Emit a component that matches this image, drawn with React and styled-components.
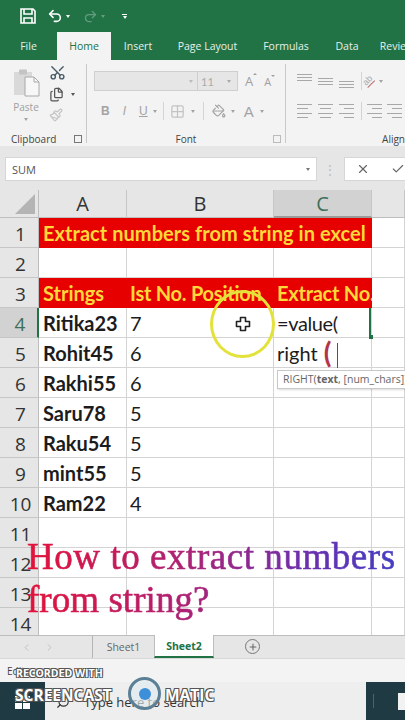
import React from "react";
import styled, { createGlobalStyle } from "styled-components";
import {
  Undo2,
  Redo2,
  Scissors,
  Files,
  Paintbrush,
  PaintBucket,
  Grid2x2,
  X,
  Check,
  Plus,
  ChevronLeft,
  ChevronRight,
  Search,
} from "lucide-react";

const GlobalStyle = createGlobalStyle`
  html, body {
    margin: 0;
    padding: 0;
    width: 405px;
    height: 720px;
    overflow: hidden;
    background: #fff;
    font-family: "Lato", "Liberation Sans", sans-serif;
  }
`;

const Screen = styled.div`
  position: relative;
  width: 405px;
  height: 720px;
  display: flex;
  flex-direction: column;
  overflow: hidden;
`;

const TitleBar = styled.div`
  height: 60px;
  flex: none;
  background: #217346;
  display: flex;
  flex-direction: column;
`;

const QuickAccess = styled.div`
  height: 32px;
  display: flex;
  align-items: center;
  padding-left: 20px;
  color: #fff;
`;

const QuickGap = styled.span`
  display: inline-flex;
  align-items: center;
  margin-left: ${(p) => p.$left || 0}px;
  opacity: ${(p) => (p.$dim ? 0.3 : 1)};
`;

const CustomizeMark = styled.span`
  display: inline-flex;
  flex-direction: column;
  align-items: center;
  gap: 1px;
  margin-left: ${(p) => p.$left}px;
  &::before {
    content: "";
    width: 5px;
    height: 1px;
    background: #fff;
  }
`;

const Caret = styled.span`
  display: inline-block;
  width: 0;
  height: 0;
  margin-left: ${(p) => p.$left ?? 3}px;
  border-left: 2.5px solid transparent;
  border-right: 2.5px solid transparent;
  border-top: 3px solid ${(p) => p.$color || "currentColor"};
`;

const Tabs = styled.div`
  height: 28px;
  display: flex;
  align-items: stretch;
  white-space: nowrap;
  overflow: hidden;
`;

const Tab = styled.div`
  flex: none;
  width: ${(p) => p.$w}px;
  text-align: center;
  line-height: 28px;
  font-family: "Open Sans", sans-serif;
  font-size: 10.5px;
  color: ${(p) => (p.$active ? "#217346" : "#e6f0ea")};
  background: ${(p) => (p.$active ? "#f3f3f3" : "transparent")};
`;

const Ribbon = styled.div`
  height: 86px;
  flex: none;
  background: #f3f3f3;
  display: flex;
  padding-top: 4px;
  box-sizing: border-box;
  overflow: hidden;
  color: #a3a3a3;
`;

const Group = styled.div`
  flex: none;
  width: ${(p) => p.$w}px;
  box-sizing: border-box;
  height: 79px;
  border-right: ${(p) => (p.$last ? "none" : "1px solid #c9c9c9")};
`;

const GroupBody = styled.div`
  height: 68px;
  display: flex;
`;

const GroupLabel = styled.div`
  position: relative;
  height: 14px;
  line-height: 14px;
  text-align: ${(p) => p.$align || "center"};
  padding-left: ${(p) => p.$pad || 0}px;
  font-family: "Open Sans", sans-serif;
  font-size: 10px;
  color: #444;
  white-space: nowrap;
`;

const Launcher = styled.span`
  position: absolute;
  right: 4px;
  top: 3px;
  width: 6px;
  height: 6px;
  border: 1px solid ${(p) => (p.$dim ? "#bbb" : "#777")};
`;

const PasteColumn = styled.div`
  width: 46px;
  display: flex;
  flex-direction: column;
  align-items: center;
  padding: 4px 0 0 6px;
  box-sizing: border-box;
`;

const PasteLabel = styled.div`
  font-family: "Open Sans", sans-serif;
  font-size: 10px;
  line-height: 14px;
  margin: 3px 0 4px;
  color: #a0a0a0;
`;

const ClipColumn = styled.div`
  display: flex;
  flex-direction: column;
  gap: 6px;
  padding-left: 3px;
`;

const ClipRow = styled.div`
  display: flex;
  align-items: center;
  color: ${(p) => p.$color || "#555"};
`;

const FontColumn = styled.div`
  display: flex;
  flex-direction: column;
  padding: 7px 0 0 ${(p) => p.$pad ?? 7}px;
  gap: 10px;
`;

const FontRow = styled.div`
  display: flex;
  align-items: center;
  height: 20px;
`;

const FontNameBox = styled.div`
  width: 104px;
  height: 20px;
  background: #e6e6e6;
  border: 1px solid #cfcfcf;
  box-sizing: border-box;
  display: flex;
  align-items: center;
  justify-content: flex-end;
  padding-right: 4px;
  color: #bbb;
`;

const FontSizeBox = styled.div`
  width: 40px;
  height: 20px;
  background: #e6e6e6;
  border: 1px solid #cfcfcf;
  border-left: none;
  box-sizing: border-box;
  display: flex;
  align-items: center;
  justify-content: space-between;
  padding: 0 6px 0 3px;
  font-size: 11px;
  color: #aaa;
`;

const GrowLetter = styled.span`
  position: relative;
  font-family: "Open Sans", sans-serif;
  font-size: ${(p) => p.$size}px;
  color: #a0a0a0;
  margin-left: ${(p) => p.$left}px;
`;

const GrowMark = styled.span`
  position: absolute;
  right: -4px;
  top: 1px;
  width: 0;
  height: 0;
  border-left: 2px solid transparent;
  border-right: 2px solid transparent;
  border-bottom: ${(p) => (p.$down ? "none" : "2px solid #a0a0a0")};
  border-top: ${(p) => (p.$down ? "2px solid #a0a0a0" : "none")};
`;

const StyleLetter = styled.span`
  font-family: "Liberation Sans", sans-serif;
  font-size: ${(p) => p.$size || 12}px;
  font-weight: ${(p) => (p.$bold ? 700 : 400)};
  font-style: ${(p) => (p.$italic ? "italic" : "normal")};
  text-decoration: ${(p) => (p.$under ? "underline" : "none")};
  color: #a3a3a3;
  margin-left: ${(p) => p.$left || 0}px;
`;

const Divider = styled.span`
  width: 1px;
  height: 18px;
  background: #d4d4d4;
  margin: 0 ${(p) => p.$gap || 6}px;
`;

const LinesIcon = styled.span`
  display: flex;
  flex-direction: column;
  width: 15px;
  height: 14px;
  margin-right: ${(p) => p.$right ?? 6}px;
  align-items: ${(p) => p.$align || "stretch"};
  justify-content: ${(p) => p.$v || "space-between"};
  gap: ${(p) => (p.$v ? "2px" : 0)};
  color: #b0b0b0;
`;

const Line = styled.i`
  display: block;
  height: 1px;
  width: ${(p) => p.$w || 100}%;
  background: #a8a8a8;
`;

const Orientation = styled.span`
  display: inline-block;
  font-family: "Liberation Sans", sans-serif;
  font-size: 9px;
  color: #aaa;
  transform: rotate(-45deg);
  border-bottom: 1px solid #c26a6a;
  line-height: 9px;
`;

const FormulaBar = styled.div`
  height: 44px;
  flex: none;
  box-sizing: border-box;
  background: #e6e6e6;
  display: flex;
  padding: 11px 0 9px 5px;
`;

const NameBox = styled.div`
  width: 320px;
  background: #fff;
  border: 1px solid #d6d6d6;
  box-sizing: border-box;
  display: flex;
  align-items: center;
  justify-content: space-between;
  padding: 0 6px;
  font-family: "Open Sans", sans-serif;
  font-size: 11px;
  color: #555;
`;

const Dots = styled.div`
  width: 28px;
  display: flex;
  align-items: center;
  justify-content: center;
  color: #bbb;
  font-size: 12px;
`;

const FormulaButtons = styled.div`
  flex: 1;
  background: #fff;
  border: 1px solid #d6d6d6;
  border-right: none;
  display: flex;
  align-items: center;
  padding-left: 11px;
  gap: 21px;
  color: #666;
`;

const Sheet = styled.div`
  height: 445px;
  flex: none;
  display: grid;
  grid-template-columns: 39px 88px 147px 98px 33px;
  grid-template-rows: 28px repeat(14, 30px);
  background: #fff;
  overflow: hidden;
`;

const Corner = styled.div`
  background: #e6e6e6;
  border-right: 1px solid #bdbdbd;
  border-bottom: 1px solid #bdbdbd;
  position: relative;
  &::after {
    content: "";
    position: absolute;
    right: 3px;
    bottom: 3px;
    border-style: solid;
    border-width: 0 0 20px 20px;
    border-color: transparent transparent #b4b4b4 transparent;
  }
`;

const ColHead = styled.div`
  background: ${(p) => (p.$active ? "#d2d2d2" : "#e6e6e6")};
  border-right: 1px solid #c6c6c6;
  border-bottom: ${(p) => (p.$active ? "2px solid #9a9a9a" : "1px solid #bdbdbd")};
  box-sizing: border-box;
  display: flex;
  align-items: center;
  justify-content: center;
  font-size: 20px;
  color: ${(p) => (p.$active ? "#3f6f58" : "#333")};
  font-family: "Open Sans", sans-serif;
`;

const RowHead = styled.div`
  background: ${(p) => (p.$active ? "#d2d2d2" : "#e6e6e6")};
  border-right: ${(p) => (p.$active ? "2px solid #217346" : "1px solid #bdbdbd")};
  border-bottom: 1px solid #c6c6c6;
  box-sizing: border-box;
  display: flex;
  align-items: center;
  justify-content: center;
  padding: 2px 0 0 3px;
  font-family: "Open Sans", sans-serif;
  font-size: 19px;
  color: ${(p) => (p.$active ? "#3f6f58" : "#333")};
`;

const Cell = styled.div`
  box-sizing: border-box;
  border-right: 1px solid ${(p) => (p.$red ? "#e60000" : "#d4d4d4")};
  border-bottom: 1px solid ${(p) => (p.$red ? "#e60000" : "#d4d4d4")};
  background: ${(p) => (p.$red ? "#e60000" : "#fff")};
  color: ${(p) => (p.$red ? "#ffd83a" : "#1c1c1c")};
  font-family: "Lato", "Liberation Sans", sans-serif;
  font-size: 20px;
  font-weight: ${(p) => (p.$bold || p.$red ? 700 : 400)};
  line-height: 31px;
  padding-left: ${(p) => p.$pad ?? 4}px;
  letter-spacing: ${(p) => p.$track || 0}px;
  white-space: nowrap;
  grid-column: ${(p) => p.$span || "auto"};
  overflow: visible;
`;

const SelectedCell = styled(Cell)`
  position: relative;
  box-shadow: inset -2px 0 0 #217346;
  letter-spacing: -0.4px;
  &::after {
    content: "";
    position: absolute;
    right: -2px;
    bottom: -2px;
    width: 4px;
    height: 4px;
    background: #217346;
  }
`;

const Paren = styled.span`
  display: inline-block;
  color: #b3344a;
  font-weight: 700;
  font-size: 28px;
  line-height: 24px;
  margin-left: 6px;
  vertical-align: -2px;
`;

const Caretbar = styled.span`
  display: inline-block;
  width: 1px;
  height: 26px;
  background: #555;
  margin-left: 6px;
  vertical-align: middle;
`;

const HintBox = styled.div`
  position: absolute;
  left: 277px;
  top: 370px;
  width: 140px;
  height: 19px;
  background: #fff;
  border: 1px solid #c8c8c8;
  box-shadow: 1px 1px 2px rgba(0, 0, 0, 0.15);
  box-sizing: border-box;
  padding-left: 5px;
  font-family: "Open Sans", sans-serif;
  font-size: 10.5px;
  line-height: 17px;
  color: #666;
  white-space: nowrap;
  overflow: hidden;
`;

const Spotlight = styled.div`
  position: absolute;
  left: 210px;
  top: 290px;
  width: 65px;
  height: 68px;
  border-radius: 50%;
  border: 3px solid #e3e23a;
  box-sizing: border-box;
  display: flex;
  align-items: center;
  justify-content: center;
`;

const Headline = styled.div`
  position: absolute;
  left: 27px;
  top: 535px;
  width: 378px;
  font-family: "Liberation Serif", serif;
  font-size: 37px;
  line-height: 43px;
  white-space: nowrap;
  letter-spacing: 0.55px;
  color: transparent;
  -webkit-text-stroke: 0.6px transparent;
  background: linear-gradient(90deg, #e3123a 0%, #a82379 45%, #6a2fb0 75%, #3f3fc4 100%);
  -webkit-background-clip: text;
  background-clip: text;
`;

const HeadlineTail = styled.span`
  letter-spacing: 0.05px;
`;

const SheetTabs = styled.div`
  height: 23px;
  flex: none;
  background: #e6e6e6;
  border-top: 1px solid #bdbdbd;
  box-sizing: border-box;
  display: flex;
  align-items: stretch;
  color: #bdbdbd;
`;

const TabArrows = styled.div`
  width: 93px;
  display: flex;
  align-items: center;
  padding-left: 21px;
  gap: 12px;
  box-sizing: border-box;
  border-right: 1px solid #b5b5b5;
`;

const SheetTab = styled.div`
  width: ${(p) => p.$w}px;
  text-align: center;
  font-family: "Open Sans", sans-serif;
  font-size: 10.5px;
  line-height: 23px;
  font-weight: ${(p) => (p.$active ? 700 : 400)};
  color: ${(p) => (p.$active ? "#217346" : "#666")};
  background: ${(p) => (p.$active ? "#fff" : "transparent")};
  border-left: ${(p) => (p.$active ? "1px solid #bdbdbd" : "none")};
  border-right: ${(p) => (p.$active ? "1px solid #bdbdbd" : "none")};
  border-bottom: ${(p) => (p.$active ? "2px solid #217346" : "none")};
  margin-top: ${(p) => (p.$active ? "-1px" : 0)};
  box-sizing: border-box;
`;

const AddSheet = styled.div`
  width: 15px;
  height: 15px;
  margin: 3px 0 0 31px;
  border: 1px solid #777;
  border-radius: 50%;
  box-sizing: border-box;
  display: flex;
  align-items: center;
  justify-content: center;
  color: #666;
`;

const StatusBar = styled.div`
  height: 24px;
  flex: none;
  background: #f3f3f3;
  border-top: 1px solid #d8d8d8;
  box-sizing: border-box;
  padding-left: 7px;
  font-family: "Open Sans", sans-serif;
  font-size: 10px;
  line-height: 24px;
  color: #444;
`;

const Taskbar = styled.div`
  height: 38px;
  flex: none;
  background: #1f3a42;
  display: flex;
  align-items: stretch;
`;

const StartButton = styled.div`
  width: 45px;
  display: flex;
  align-items: flex-end;
  padding: 0 0 11px 15px;
  box-sizing: border-box;
`;

const WinIcon = styled.div`
  display: grid;
  grid-template-columns: 7px 7px;
  grid-template-rows: 6px 6px;
  gap: 1px;
  & > span {
    background: #fff;
  }
`;

const SearchBox = styled.div`
  width: 321px;
  background: #eeeeee;
  display: flex;
  align-items: center;
  padding: 2px 0 0 11px;
  box-sizing: border-box;
  font-family: "Open Sans", sans-serif;
  font-size: 13px;
  color: #333;
  gap: 14px;
`;

const TrayArea = styled.div`
  flex: 1;
  display: flex;
  align-items: center;
  justify-content: space-between;
  padding-left: 7px;
`;

const TraySeparator = styled.div`
  width: 1px;
  height: 14px;
  background: #4d6269;
`;

const TrayIcon = styled.div`
  width: 7px;
  height: 17px;
  background: #f2f2f2;
`;

const Watermark = styled.div`
  position: absolute;
  font-family: "Open Sans", sans-serif;
  font-weight: 700;
  color: #fff;
  white-space: nowrap;
  text-shadow: -1px -1px 0 #555, 1px -1px 0 #555, -1px 1px 0 #555, 1px 1px 0 #555;
  left: ${(p) => p.$x}px;
  top: ${(p) => p.$y}px;
  font-size: ${(p) => p.$size}px;
`;

const RecordDot = styled.div`
  position: absolute;
  left: 128px;
  top: 677px;
  width: 33px;
  height: 33px;
  border-radius: 50%;
  background: rgba(225, 235, 240, 0.65);
  border: 3px solid #5b7f95;
  box-sizing: border-box;
  display: flex;
  align-items: center;
  justify-content: center;
  &::after {
    content: "";
    width: 12px;
    height: 12px;
    border-radius: 50%;
    background: #3c8fd8;
  }
`;

const people = [
  ["Ritika23", "7"],
  ["Rohit45", "6"],
  ["Rakhi55", "6"],
  ["Saru78", "5"],
  ["Raku54", "5"],
  ["mint55", "5"],
  ["Ram22", "4"],
];

const blankRow = (n) => (
  <React.Fragment key={n}>
    <RowHead>{n}</RowHead>
    <Cell />
    <Cell />
    <Cell />
    <Cell />
  </React.Fragment>
);

const SaveIcon = () => (
  <svg width="16" height="16" viewBox="0 0 16 16" fill="none" stroke="#fff" strokeWidth="1.6">
    <path d="M1 1h12l2 2v12H1z" />
    <path d="M4 1v5h8V1M4 15v-5h8v5" />
  </svg>
);

const PasteIcon = () => (
  <svg width="27" height="29" viewBox="0 0 27 29">
    <rect x="1" y="4" width="18" height="23" fill="#d9d9d9" />
    <rect x="6" y="1.5" width="8" height="5" rx="1" fill="#c4c4c4" />
    <path d="M12 9h9l5 5v14H12z" fill="#f7f7f7" stroke="#a8a8a8" />
    <path d="M21 9v5h5" fill="none" stroke="#a8a8a8" />
  </svg>
);

const CursorCross = () => (
  <svg width="16" height="16" viewBox="0 0 16 16">
    <path
      d="M5.5 1.5h5v4h4v5h-4v4h-5v-4h-4v-5h4z"
      fill="#fff"
      stroke="#222"
      strokeWidth="1.6"
      strokeLinejoin="round"
    />
  </svg>
);

const Lines = ({ align, right }) => (
  <LinesIcon $align={align} $right={right}>
    <Line />
    <Line $w={70} />
    <Line />
    <Line $w={70} />
  </LinesIcon>
);

const ShortLines = ({ v }) => (
  <LinesIcon $v={v}>
    <Line />
    <Line />
    <Line />
  </LinesIcon>
);

const App = () => {
  return (
    <Screen>
      <GlobalStyle />
      <TitleBar>
        <QuickAccess>
          <SaveIcon />
          <QuickGap $left={11}>
            <Undo2 size={16} strokeWidth={2.4} />
            <Caret />
          </QuickGap>
          <QuickGap $left={13} $dim>
            <Redo2 size={15} />
            <Caret />
          </QuickGap>
          <CustomizeMark $left={17}>
            <Caret $left={0} />
          </CustomizeMark>
        </QuickAccess>
        <Tabs>
          <Tab $w={57}>File</Tab>
          <Tab $w={54} $active>
            Home
          </Tab>
          <Tab $w={54}>Insert</Tab>
          <Tab $w={85}>Page Layout</Tab>
          <Tab $w={72}>Formulas</Tab>
          <Tab $w={50}>Data</Tab>
          <Tab $w={50}>Review</Tab>
        </Tabs>
      </TitleBar>

      <Ribbon>
        <Group $w={87}>
          <GroupBody>
            <PasteColumn>
              <PasteIcon />
              <PasteLabel>Paste</PasteLabel>
              <Caret $left={0} />
            </PasteColumn>
            <ClipColumn>
              <ClipRow $color="#4a5a66">
                <Scissors size={17} style={{ transform: "rotate(-90deg)" }} />
              </ClipRow>
              <ClipRow>
                <Files size={15} />
                <Caret $left={7} />
              </ClipRow>
              <ClipRow $color="#c4c4c4">
                <Paintbrush size={14} />
              </ClipRow>
            </ClipColumn>
          </GroupBody>
          <GroupLabel $align="left" $pad={11}>
            Clipboard
            <Launcher />
          </GroupLabel>
        </Group>

        <Group $w={199}>
          <GroupBody>
            <FontColumn>
              <FontRow>
                <FontNameBox>
                  <Caret $left={0} />
                </FontNameBox>
                <FontSizeBox>
                  11
                  <Caret $left={0} />
                </FontSizeBox>
                <GrowLetter $size={13} $left={7}>
                  A
                  <GrowMark />
                </GrowLetter>
                <GrowLetter $size={11} $left={11}>
                  A
                  <GrowMark $down />
                </GrowLetter>
              </FontRow>
              <FontRow>
                <StyleLetter $bold $left={7}>
                  B
                </StyleLetter>
                <StyleLetter $italic $left={13}>
                  I
                </StyleLetter>
                <StyleLetter $under $left={13}>
                  U
                </StyleLetter>
                <Caret $left={5} />
                <Divider />
                <Grid2x2 size={15} color="#c4c4c4" />
                <Caret $left={6} />
                <Divider $gap={8} />
                <PaintBucket size={14} />
                <Caret $left={5} />
                <StyleLetter $left={9} $size={15}>
                  A
                </StyleLetter>
                <Caret $left={6} />
              </FontRow>
            </FontColumn>
          </GroupBody>
          <GroupLabel>
            Font
            <Launcher $dim />
          </GroupLabel>
        </Group>

        <Group $w={119} $last>
          <GroupBody>
            <FontColumn $pad={11}>
              <FontRow>
                <ShortLines v="flex-start" />
                <ShortLines v="center" />
                <ShortLines v="flex-end" />
                <Divider $gap={1} />
                <Orientation>ab</Orientation>
                <Caret $left={6} />
              </FontRow>
              <FontRow>
                <Lines align="flex-start" />
                <Lines align="center" />
                <Lines align="flex-end" right={2} />
                <Divider $gap={5} />
                <Lines align="flex-end" right={5} />
                <Lines align="flex-end" right={0} />
              </FontRow>
            </FontColumn>
          </GroupBody>
          <GroupLabel $align="right">Align</GroupLabel>
        </Group>
      </Ribbon>

      <FormulaBar>
        <NameBox>
          SUM
          <Caret $left={0} $color="#777" />
        </NameBox>
        <Dots>⋮</Dots>
        <FormulaButtons>
          <X size={14} />
          <Check size={14} />
        </FormulaButtons>
      </FormulaBar>

      <Sheet>
        <Corner />
        <ColHead>A</ColHead>
        <ColHead>B</ColHead>
        <ColHead $active>C</ColHead>
        <ColHead />

        <RowHead>1</RowHead>
        <Cell $red $span="span 3" $track={0.05}>
          Extract numbers from string in excel
        </Cell>
        <Cell />

        {blankRow(2)}

        <RowHead>3</RowHead>
        <Cell $red>Strings</Cell>
        <Cell $red $pad={3} $track={-0.25}>
          Ist No. Position
        </Cell>
        <Cell $red $pad={3} $track={-0.25}>
          Extract No.
        </Cell>
        <Cell />

        {people.map(([name, pos], i) => {
          const n = i + 4;
          let third = <Cell />;
          if (n === 4) third = <SelectedCell $pad={3}>=value(</SelectedCell>;
          if (n === 5)
            third = (
              <Cell $pad={3}>
                right<Paren>(</Paren>
                <Caretbar />
              </Cell>
            );
          return (
            <React.Fragment key={n}>
              <RowHead $active={n === 4}>{n}</RowHead>
              <Cell $bold>{name}</Cell>
              <Cell $pad={3}>{pos}</Cell>
              {third}
              <Cell />
            </React.Fragment>
          );
        })}

        {[11, 12, 13, 14].map(blankRow)}
      </Sheet>

      <SheetTabs>
        <TabArrows>
          <ChevronLeft size={11} />
          <ChevronRight size={11} />
        </TabArrows>
        <SheetTab $w={61}>Sheet1</SheetTab>
        <SheetTab $w={60} $active>
          Sheet2
        </SheetTab>
        <AddSheet>
          <Plus size={10} strokeWidth={2.5} />
        </AddSheet>
      </SheetTabs>

      <StatusBar>Edit</StatusBar>

      <Taskbar>
        <StartButton>
          <WinIcon>
            <span />
            <span />
            <span />
            <span />
          </WinIcon>
        </StartButton>
        <SearchBox>
          <Search size={14} style={{ transform: "scaleX(-1)" }} />
          Type here to search
        </SearchBox>
        <TrayArea>
          <TraySeparator />
          <TrayIcon />
        </TrayArea>
      </Taskbar>

      <HintBox>
        RIGHT(<b>text</b>, [num_chars])
      </HintBox>
      <Spotlight>
        <CursorCross />
      </Spotlight>
      <Headline>
        How to extract numbers
        <br />
        <HeadlineTail>from string?</HeadlineTail>
      </Headline>
      <Watermark $x={16} $y={666} $size={10.5}>
        RECORDED WITH
      </Watermark>
      <Watermark $x={15} $y={684} $size={15.5}>
        SCREENCAST
      </Watermark>
      <RecordDot />
      <Watermark $x={165} $y={684} $size={15.5}>
        MATIC
      </Watermark>
    </Screen>
  );
};

export default App;
